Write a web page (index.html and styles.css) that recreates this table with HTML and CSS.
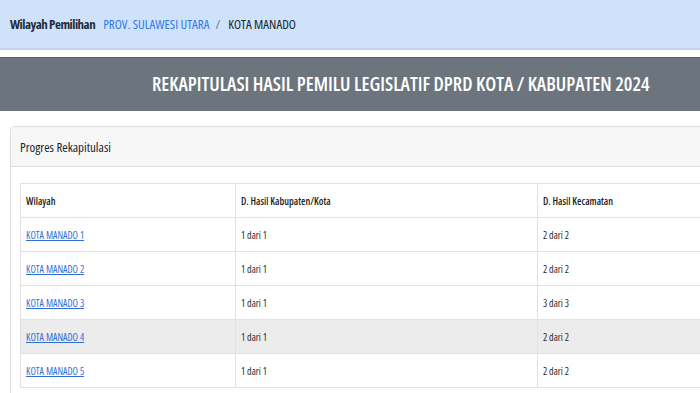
FILE: index.html
```html
<!DOCTYPE html>
<html lang="id">
<head>
<meta charset="utf-8">
<title>Rekapitulasi</title>
<link rel="stylesheet" href="styles.css">
</head>
<body>
<div class="page">
  <nav class="topbar">
    <span class="crumb-label">Wilayah Pemilihan</span>
    <a class="crumb-link" href="#">PROV. SULAWESI UTARA</a>
    <span class="crumb-sep">/</span>
    <span class="crumb-current">KOTA MANADO</span>
  </nav>
  <header class="titlebar">
    <h1>REKAPITULASI HASIL PEMILU LEGISLATIF DPRD KOTA / KABUPATEN 2024</h1>
  </header>
  <section class="card">
    <div class="card-header">Progres Rekapitulasi</div>
    <div class="card-body">
      <table class="tbl">
        <colgroup>
          <col class="c1"><col class="c2"><col class="c3">
        </colgroup>
        <thead>
          <tr><th>Wilayah</th><th>D. Hasil Kabupaten/Kota</th><th>D. Hasil Kecamatan</th></tr>
        </thead>
        <tbody>
          <tr><td><a href="#">KOTA MANADO 1</a></td><td>1 dari 1</td><td>2 dari 2</td></tr>
          <tr><td><a href="#">KOTA MANADO 2</a></td><td>1 dari 1</td><td>2 dari 2</td></tr>
          <tr><td><a href="#">KOTA MANADO 3</a></td><td>1 dari 1</td><td>3 dari 3</td></tr>
          <tr class="hover"><td><a href="#">KOTA MANADO 4</a></td><td>1 dari 1</td><td>2 dari 2</td></tr>
          <tr><td><a href="#">KOTA MANADO 5</a></td><td>1 dari 1</td><td>2 dari 2</td></tr>
        </tbody>
      </table>
    </div>
  </section>
</div>
</body>
</html>
```

FILE: styles.css
```css
html, body {
  margin: 0;
  padding: 0;
  background: #ffffff;
  overflow: hidden;
}
body {
  font-family: "Open Sans", "Liberation Sans", sans-serif;
  font-stretch: 75%;
  color: #212529;
}
.page {
  width: 760px;
}
.topbar {
  height: 48px;
  background: #cfe2fc;
  border-bottom: 2px solid #c0d4ee;
  display: flex;
  align-items: center;
  padding-left: 10px;
  font-size: 13px;
}
.crumb-label {
  font-weight: 700;
  color: #1f2b3a;
  letter-spacing: -0.5px;
  margin-right: 8px;
}
.crumb-link {
  color: #2f7ae5;
  text-decoration: none;
}
.crumb-sep {
  color: #6c757d;
  margin: 0 8px 0 6px;
}
.crumb-current {
  color: #212529;
}
.titlebar {
  margin-top: 7px;
  height: 53px;
  background: #6c757d;
  border-top: 1px solid #59616a;
  display: flex;
  align-items: center;
  padding-left: 152px;
}
.titlebar h1 {
  margin: 0 0 2px;
  color: #ffffff;
  font-size: 19.3px;
  font-weight: 600;
}
.card {
  margin: 15px 0 0 10px;
  border: 1px solid #dcdcdc;
  border-radius: 5px;
}
.card-header {
  height: 39px;
  background: #f7f7f7;
  border-bottom: 1px solid #dcdcdc;
  border-radius: 5px 5px 0 0;
  display: flex;
  align-items: center;
  padding-left: 9px;
  font-size: 13px;
}
.card-body {
  padding: 16px 9px;
}
.tbl {
  border-collapse: collapse;
  table-layout: fixed;
  width: 720px;
  font-size: 10px;
  color: #2b2b2b;
}
.tbl .c1 { width: 215px; }
.tbl .c2 { width: 302px; }
.tbl th, .tbl td {
  border: 1px solid #e2e2e2;
  height: 33px;
  padding: 0 5px;
  text-align: left;
  vertical-align: middle;
}
.tbl th {
  font-weight: 600;
  color: #1c1c1c;
}
.tbl a {
  color: #2f6fd6;
}
.tbl tr.hover td {
  background: #ececec;
}
```
